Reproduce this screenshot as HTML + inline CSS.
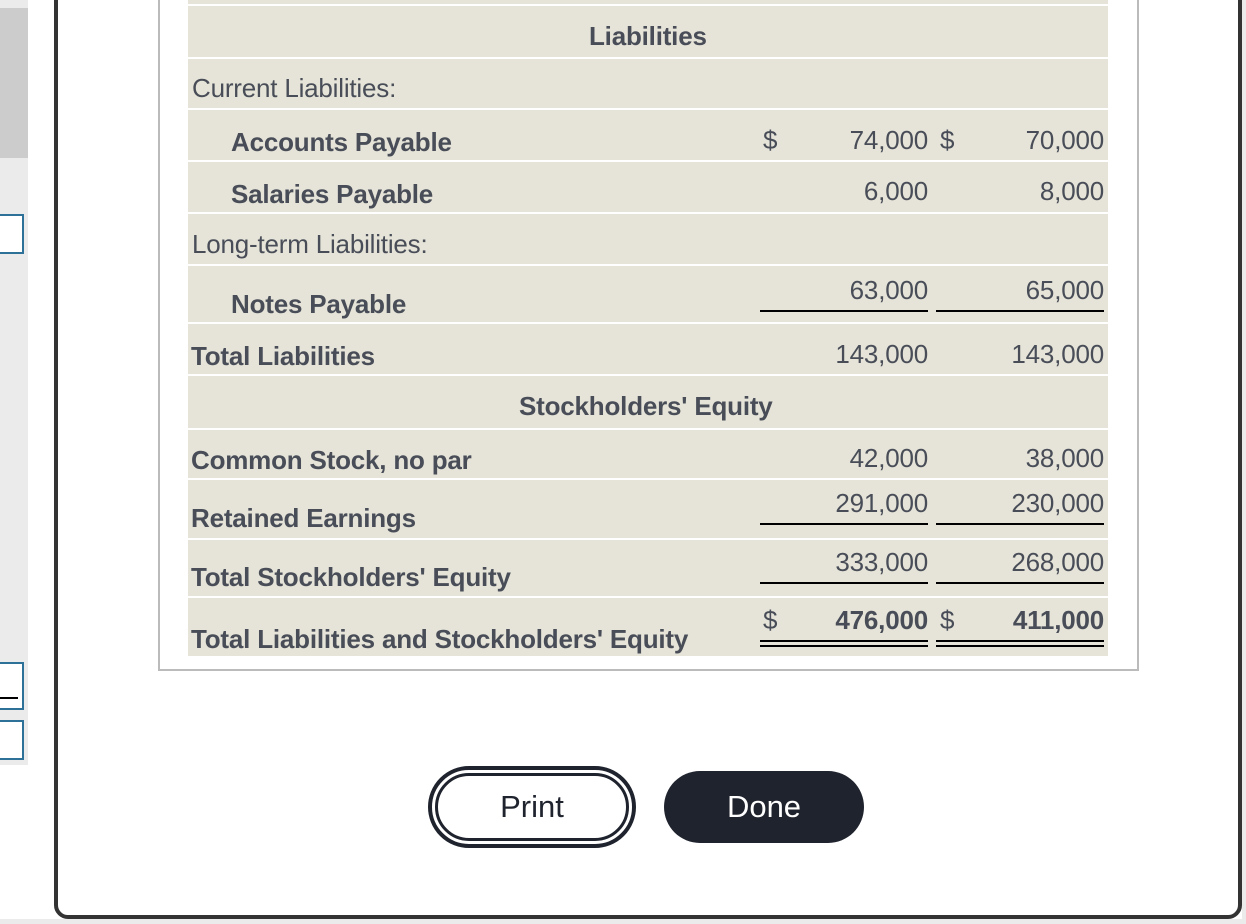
<!DOCTYPE html>
<html><head><style>
*{margin:0;padding:0;box-sizing:border-box}
body{width:1246px;height:924px;position:relative;overflow:hidden;background:#fff;font-family:"Liberation Sans",Arial,sans-serif;color:#484d58}
.a{position:absolute}
.row{position:absolute;left:188px;width:920px;background:#e6e4d8}
.t{position:absolute;font-size:26px;white-space:nowrap;line-height:26px;letter-spacing:-0.2px}
.b{font-weight:bold}
.r{text-align:right}
.ul{position:absolute;height:2px;background:#000}
</style></head><body>
<div class="a" style="left:0;top:0;width:28px;height:765px;background:#ebebeb"></div>
<div class="a" style="left:0;top:8px;width:28px;height:150px;background:#cccccc"></div>
<div class="a" style="left:-4px;top:214px;width:28px;height:40px;border:2px solid #2e7198;background:#fff"></div>
<div class="a" style="left:-4px;top:662px;width:28px;height:48px;border:2px solid #2e7198;background:#fff"></div>
<div class="a" style="left:0;top:697px;width:18px;height:2px;background:#000"></div>
<div class="a" style="left:-4px;top:720px;width:28px;height:40px;border:2px solid #2e7198;background:#fff"></div>
<div class="a" style="left:1242px;top:0;width:4px;height:924px;background:#ebebeb"></div>
<div class="a" style="left:0;top:919px;width:1246px;height:5px;background:#ebebeb"></div>
<div class="a" style="left:54px;top:-20px;width:1188px;height:939px;border:4px solid #333;border-radius:14px;background:#fff"></div>
<div class="a" style="left:158px;top:-4px;width:981px;height:675px;border:2px solid #bbb;background:#fff"></div>
<div class="row" style="top:0;height:4px"></div>
<div class="row" style="top:6px;height:51px"></div>
<div class="row" style="top:59px;height:49px"></div>
<div class="row" style="top:110px;height:50px"></div>
<div class="row" style="top:162px;height:50px"></div>
<div class="row" style="top:214px;height:50px"></div>
<div class="row" style="top:266px;height:56px"></div>
<div class="row" style="top:324px;height:50px"></div>
<div class="row" style="top:376px;height:52px"></div>
<div class="row" style="top:430px;height:48px"></div>
<div class="row" style="top:480px;height:58px"></div>
<div class="row" style="top:540px;height:56px"></div>
<div class="row" style="top:598px;height:58px"></div>

<div class="t b" style="left:589px;top:23px">Liabilities</div>
<div class="t" style="left:192px;top:75px">Current Liabilities:</div>
<div class="t b" style="left:231px;top:129px">Accounts Payable</div>
<div class="t" style="left:763px;top:127px">$</div>
<div class="t r" style="left:740px;width:188px;top:127px">74,000</div>
<div class="t" style="left:940px;top:127px">$</div>
<div class="t r" style="left:916px;width:188px;top:127px">70,000</div>
<div class="t b" style="left:231px;top:181px">Salaries Payable</div>
<div class="t r" style="left:740px;width:188px;top:178px">6,000</div>
<div class="t r" style="left:916px;width:188px;top:178px">8,000</div>
<div class="t" style="left:192px;top:231px">Long-term Liabilities:</div>
<div class="t b" style="left:231px;top:291px">Notes Payable</div>
<div class="t r" style="left:740px;width:188px;top:277px">63,000</div>
<div class="t r" style="left:916px;width:188px;top:277px">65,000</div>
<div class="ul" style="left:760px;top:310px;width:168px"></div>
<div class="ul" style="left:936px;top:310px;width:168px"></div>
<div class="t b" style="left:191px;top:343px">Total Liabilities</div>
<div class="t r" style="left:740px;width:188px;top:341px">143,000</div>
<div class="t r" style="left:916px;width:188px;top:341px">143,000</div>
<div class="t b" style="left:519px;top:393px">Stockholders' Equity</div>
<div class="t b" style="left:191px;top:447px">Common Stock, no par</div>
<div class="t r" style="left:740px;width:188px;top:445px">42,000</div>
<div class="t r" style="left:916px;width:188px;top:445px">38,000</div>
<div class="t b" style="left:191px;top:505px">Retained Earnings</div>
<div class="t r" style="left:740px;width:188px;top:490px">291,000</div>
<div class="t r" style="left:916px;width:188px;top:490px">230,000</div>
<div class="ul" style="left:760px;top:523px;width:168px"></div>
<div class="ul" style="left:936px;top:523px;width:168px"></div>
<div class="t b" style="left:191px;top:564px">Total Stockholders' Equity</div>
<div class="t r" style="left:740px;width:188px;top:549px">333,000</div>
<div class="t r" style="left:916px;width:188px;top:549px">268,000</div>
<div class="ul" style="left:760px;top:582px;width:168px"></div>
<div class="ul" style="left:936px;top:582px;width:168px"></div>
<div class="t b" style="left:191px;top:626px">Total Liabilities and Stockholders' Equity</div>
<div class="t" style="left:763px;top:607px">$</div>
<div class="t b r" style="left:740px;width:188px;top:607px">476,000</div>
<div class="t" style="left:940px;top:607px">$</div>
<div class="t b r" style="left:916px;width:188px;top:607px">411,000</div>
<div class="ul" style="left:760px;top:640px;width:168px"></div>
<div class="ul" style="left:760px;top:645px;width:168px"></div>
<div class="ul" style="left:936px;top:640px;width:168px"></div>
<div class="ul" style="left:936px;top:645px;width:168px"></div>

<div class="a" style="left:428px;top:766px;width:208px;height:82px;border:4px solid #1f232d;border-radius:41px;background:#fff"></div>
<div class="a" style="left:435px;top:773px;width:194px;height:68px;border:3px solid #1f232d;border-radius:34px;background:#fff;font-size:31px;line-height:62px;text-align:center;color:#1f232d">Print</div>
<div class="a" style="left:664px;top:771px;width:200px;height:72px;border-radius:36px;background:#1f232d;color:#fff;font-size:31px;line-height:72px;text-align:center">Done</div>
</body></html>
